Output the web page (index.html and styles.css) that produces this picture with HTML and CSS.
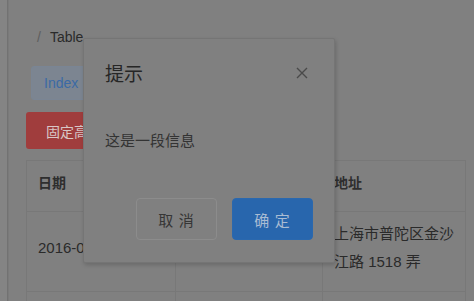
FILE: index.html
```html
<!DOCTYPE html>
<html lang="zh">
<head>
<meta charset="utf-8">
<title>Table</title>
<link rel="stylesheet" href="styles.css">
</head>
<body>
<div class="app">
  <aside class="sidebar"></aside>
  <main class="main">
    <div class="breadcrumb"><span class="sep">/</span><span class="crumb">Table</span></div>
    <div class="tags"><span class="tag">Index</span></div>
    <div class="toolbar"><button class="btn-danger">固定高度</button></div>
    <table class="grid">
      <colgroup><col class="c1"><col class="c2"><col class="c3"></colgroup>
      <thead>
        <tr><th>日期</th><th>姓名</th><th>地址</th></tr>
      </thead>
      <tbody>
        <tr><td>2016-05-03</td><td>王小虎</td><td>上海市普陀区金沙江路 1518 弄</td></tr>
        <tr class="empty"><td></td><td></td><td></td></tr>
      </tbody>
    </table>
  </main>
</div>

<div class="dialog">
  <div class="dialog-header">
    <span class="dialog-title">提示</span>
    <svg class="close" width="12" height="12" viewBox="0 0 12 12"><path d="M1 1 L11 11 M11 1 L1 11" stroke="#4a4a4a" stroke-width="1.4" fill="none"/></svg>
  </div>
  <div class="dialog-body">这是一段信息</div>
  <div class="dialog-footer">
    <button class="btn btn-cancel">取 消</button>
    <button class="btn btn-ok">确 定</button>
  </div>
</div>
</body>
</html>
```

FILE: styles.css
```css
html, body {
  margin: 0;
  padding: 0;
  width: 474px;
  height: 301px;
  overflow: hidden;
  background: #808080;
  font-family: "Liberation Sans", "Noto Sans CJK SC", sans-serif;
  color: #2a2a2a;
}

.app {
  display: flex;
  height: 301px;
}

.sidebar {
  width: 7px;
  flex: none;
  background: #848484;
  border-right: 1px solid #727272;
  box-shadow: 1px 0 0 #7a7a7a;
}

.main {
  flex: 1;
  padding: 0 0 0 18px;
  display: flex;
  flex-direction: column;
}

.breadcrumb {
  margin-top: 27px;
  padding-left: 11px;
  height: 20px;
  line-height: 20px;
  font-size: 14px;
}

.sep {
  color: #5e5e5e;
  margin-right: 9px;
}

.crumb {
  color: #2a2a2a;
}

.tags {
  margin-top: 19px;
  padding-left: 5px;
  display: flex;
}

.tag {
  display: inline-block;
  height: 32px;
  line-height: 32px;
  padding: 0 12px;
  background: #7c8591;
  border: 1px solid #7a8594;
  border-radius: 3px;
  color: #3b6aa5;
  font-size: 14px;
}

.toolbar {
  margin-top: 12px;
  display: flex;
}

.btn-danger {
  height: 37px;
  padding: 0 20px;
  border: none;
  border-radius: 3px;
  background: #a03d3d;
  color: #d8c6c6;
  font-size: 14px;
  font-family: "Liberation Sans", "Noto Sans CJK SC", sans-serif;
}

.grid {
  margin-top: 11px;
  width: 440px;
  border-collapse: collapse;
  border: 1px solid #777777;
  font-size: 15px;
}

.c1 { width: 149px; }
.c2 { width: 147px; }
.c3 { width: 143px; }

.grid th, .grid td {
  border: 1px solid #787878;
  text-align: left;
  vertical-align: middle;
}

.grid th {
  height: 44px;
  padding: 0 11px 6px;
  line-height: 20px;
  font-weight: bold;
  font-size: 14px;
  color: #2e2e2e;
}

.grid td {
  height: 72px;
  padding: 0 11px 7px;
  line-height: 28px;
  color: #2a2a2a;
}

.grid tr.empty td {
  height: 40px;
}

.dialog {
  position: absolute;
  left: 83px;
  top: 38px;
  width: 250px;
  height: 223px;
  background: #808080;
  border: 1px solid #757575;
  border-radius: 2px;
  box-shadow: 1px 2px 4px rgba(0, 0, 0, 0.18);
  display: flex;
  flex-direction: column;
}

.dialog-header {
  padding: 22px 26px 0 21px;
  height: 24px;
  display: flex;
  align-items: center;
  justify-content: space-between;
}

.dialog-title {
  font-size: 19px;
  line-height: 24px;
  color: #262626;
  font-family: "Noto Sans CJK SC", sans-serif;
}

.close {
  display: block;
}

.dialog-body {
  margin-top: 44px;
  padding: 0 21px;
  font-size: 15px;
  line-height: 22px;
  color: #333333;
  font-family: "Noto Sans CJK SC", sans-serif;
}

.dialog-footer {
  margin-top: auto;
  padding: 0 21px 22px;
  display: flex;
  justify-content: flex-end;
  gap: 15px;
}

.btn {
  width: 81px;
  height: 42px;
  border-radius: 4px;
  font-size: 15px;
  font-family: "Noto Sans CJK SC", sans-serif;
  letter-spacing: 1px;
}

.btn-cancel {
  background: #808080;
  border: 1px solid #8c8c8c;
  color: #363636;
}

.btn-ok {
  background: #2866ad;
  border: 1px solid #2a68ae;
  color: #a9bcd3;
}
```
